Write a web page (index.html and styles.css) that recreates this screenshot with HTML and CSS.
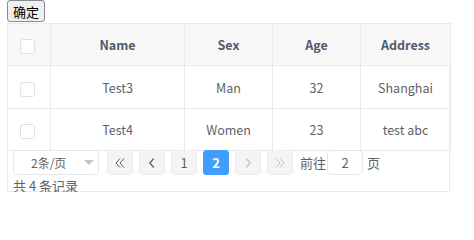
FILE: index.html
```html
<!DOCTYPE html>
<html lang="zh">
<head>
<meta charset="utf-8">
<link rel="stylesheet" href="styles.css">
</head>
<body>
<button class="ok-btn">确定</button>
<div class="grid-box">
  <table class="grid">
    <colgroup>
      <col class="c-check"><col class="c-name"><col class="c-sex"><col class="c-age"><col class="c-addr">
    </colgroup>
    <thead>
      <tr>
        <th><span class="chk"></span></th>
        <th>Name</th>
        <th>Sex</th>
        <th>Age</th>
        <th>Address</th>
      </tr>
    </thead>
    <tbody>
      <tr>
        <td><span class="chk"></span></td>
        <td>Test3</td>
        <td>Man</td>
        <td>32</td>
        <td>Shanghai</td>
      </tr>
      <tr>
        <td><span class="chk"></span></td>
        <td>Test4</td>
        <td>Women</td>
        <td>23</td>
        <td>test abc</td>
      </tr>
    </tbody>
  </table>
  <div class="pager">
    <div class="sizes"><span class="sizes-label">2条/页</span><i class="caret"></i></div>
    <div class="pbtns">
      <span class="pbtn"><svg width="14" height="14" viewBox="0 0 14 14"><path d="M7 2.5 3 7l4 4.5M11 2.5 7 7l4 4.5" fill="none" stroke="currentColor" stroke-width="1"/></svg></span>
      <span class="pbtn"><svg width="14" height="14" viewBox="0 0 14 14"><path d="M8.8 2.5 4.8 7l4 4.5" fill="none" stroke="currentColor" stroke-width="1.3"/></svg></span>
      <span class="pbtn num">1</span>
      <span class="pbtn num active">2</span>
      <span class="pbtn off"><svg width="14" height="14" viewBox="0 0 14 14"><path d="M5.2 2.5 9.2 7l-4 4.5" fill="none" stroke="currentColor" stroke-width="1.3"/></svg></span>
      <span class="pbtn off"><svg width="14" height="14" viewBox="0 0 14 14"><path d="M3 2.5 7 7l-4 4.5M7 2.5 11 7l-4 4.5" fill="none" stroke="currentColor" stroke-width="1"/></svg></span>
    </div>
    <span class="jump">前往</span>
    <span class="jump-input">2</span>
    <span class="jump">页</span>
  </div>
  <div class="total">共 4 条记录</div>
</div>
</body>
</html>
```
FILE: styles.css
```css
html, body {
  margin: 0;
  background: #fff;
}
body {
  padding: 0 0 0 7px;
  font-family: "Noto Sans CJK SC", "Noto Sans", sans-serif;
  color: #606266;
}
.ok-btn {
  display: block;
  height: 22px;
  width: 38px;
  padding: 0;
  margin: 0 0 1px 0;
  font-family: "Noto Sans CJK SC", sans-serif;
  font-size: 13px;
  color: #000;
  background: #efefef;
  border: 1px solid #8a8a8a;
  border-radius: 3px;
}
.grid-box {
  width: 441px;
  height: 168px;
  border: 1px solid #e8eaec;
  border-top: none;
}
.grid {
  width: 443px;
  margin-left: -1px;
  border-collapse: collapse;
  table-layout: fixed;
  font-size: 12.5px;
}
.c-check { width: 43px; }
.c-name { width: 134px; }
.c-sex { width: 88px; }
.c-age { width: 88px; }
.c-addr { width: 90px; }
.grid th, .grid td {
  border: 1px solid #e8eaec;
  padding: 0;
  text-align: center;
  vertical-align: middle;
}
.grid th {
  height: 41px;
  background: #f8f8f9;
  color: #515a6e;
  font-weight: 700;
}
.grid td {
  height: 42px;
  color: #606266;
}
.grid tbody tr:last-child td { height: 41px; }
.chk {
  display: inline-block;
  width: 13px;
  height: 13px;
  border: 1px solid #dcdfe6;
  border-radius: 3px;
  background: #fff;
  vertical-align: middle;
  margin-left: -4px;
}
.pager {
  display: flex;
  align-items: center;
  height: 25px;
  padding-left: 5px;
  margin-top: -1px;
  font-size: 13px;
  white-space: nowrap;
}
.sizes {
  box-sizing: border-box;
  flex: none;
  width: 86px;
  height: 25px;
  border: 1px solid #e4e7ed;
  border-radius: 4px;
  background: #fff;
  display: flex;
  align-items: center;
  padding-left: 17px;
  font-size: 12px;
  color: #606266;
}
.sizes-label { white-space: nowrap; }
.caret {
  margin-left: 18px;
  width: 0;
  height: 0;
  border-left: 5px solid transparent;
  border-right: 5px solid transparent;
  border-top: 5px solid #c0c4cc;
}
.pbtns {
  display: flex;
  gap: 6px;
  margin-left: 8px;
  flex: none;
}
.pbtn {
  box-sizing: border-box;
  width: 26px;
  height: 25px;
  border-radius: 3px;
  background: #f4f4f5;
  border: 1px solid #ebedf0;
  display: flex;
  align-items: center;
  justify-content: center;
  color: #606266;
  font-size: 13px;
}
.pbtn.off { color: #c0c4cc; }
.pbtn.active {
  background: #409eff;
  border-color: #409eff;
  color: #fff;
  font-weight: 700;
}
.jump {
  font-size: 13px;
  color: #606266;
  margin-left: 7px;
}
.jump-input {
  box-sizing: border-box;
  flex: none;
  width: 36px;
  height: 25px;
  margin-left: 1px;
  border: 1px solid #e4e7ed;
  border-radius: 4px;
  background: #fff;
  display: flex;
  align-items: center;
  justify-content: center;
  font-size: 13px;
}
.jump-input + .jump { margin-left: 4px; }
.total {
  padding-left: 5px;
  margin-top: 2px;
  font-size: 13px;
  line-height: 17px;
  color: #606266;
}
```
